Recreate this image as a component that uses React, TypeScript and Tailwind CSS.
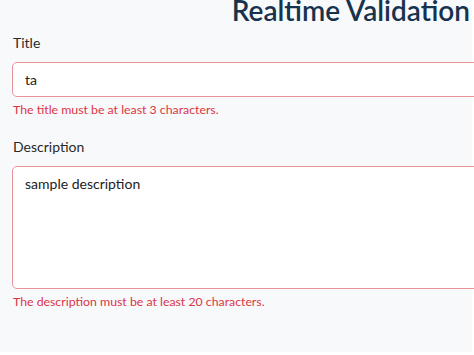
export default function App() {
  return (
    <div className="w-[474px] h-[355px] bg-white overflow-hidden" style={{ fontFamily: "Lato, 'Noto Sans', sans-serif" }}>
      <div className="w-[472px] h-[352px] bg-[#f8f9fb] pl-[12px] flex flex-col">
        <div className="flex justify-end pr-[2px] -mt-[7px] h-[30px]">
          <h1 className="text-[28px] leading-[34px] font-semibold text-[#17324d]">Realtime Validation</h1>
        </div>
        <label className="mt-[10px] pl-[1px] text-[14px] leading-[20px] text-[#2a2a2a]">Title</label>
        <div className="mt-[9px] h-[35px] w-[470px] bg-white border border-[#e8939a] rounded-[5px] flex items-center pl-[12px] text-[14px] text-[#222]">
          ta
        </div>
        <div className="mt-[5px] pl-[1px] text-[12.3px] leading-[16px] text-[#dc3545]">The title must be at least 3 characters.</div>
        <label className="mt-[19px] pl-[1px] text-[14px] leading-[20px] text-[#2a2a2a]">Description</label>
        <div className="mt-[9px] h-[123px] w-[470px] bg-white border border-[#e8939a] rounded-[5px] pl-[12px] pt-[8px] text-[14px] leading-[18px] text-[#222]">
          sample description
        </div>
        <div className="mt-[5px] pl-[1px] text-[12.3px] leading-[16px] text-[#dc3545]">The description must be at least 20 characters.</div>
      </div>
    </div>
  );
}
